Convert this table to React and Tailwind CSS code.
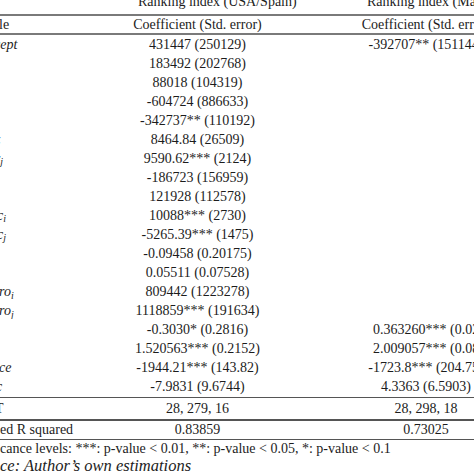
const body = [
  { label: 'cept', lm: 'ml-[-6px]', a: '431447 (250129)', b: '-392707** (151144)' },
  { label: '', lm: '', a: '183492 (202768)', b: '' },
  { label: '', lm: '', a: '88018 (104319)', b: '' },
  { label: '', lm: '', a: '-604724 (886633)', b: '' },
  { label: '', lm: '', a: '-342737** (110192)', b: '' },
  { label: 'z', sub: '', lm: 'ml-[-5px]', a: '8464.84 (26509)', b: '' },
  { label: 'y', sub: 'j', lm: 'ml-[-6px]', a: '9590.62*** (2124)', b: '' },
  { label: '', lm: '', a: '-186723 (156959)', b: '' },
  { label: '', lm: '', a: '121928 (112578)', b: '' },
  { label: 'c', sub: 'i', lm: 'ml-[-3px]', a: '10088*** (2730)', b: '' },
  { label: 'c', sub: 'j', lm: 'ml-[-3px]', a: '-5265.39*** (1475)', b: '' },
  { label: '', lm: '', a: '-0.09458 (0.20175)', b: '' },
  { label: '', lm: '', a: '0.05511 (0.07528)', b: '' },
  { label: 'ro', sub: 'i', lm: 'ml-[-1px]', a: '809442 (1223278)', b: '' },
  { label: 'ro', sub: 'j', lm: 'ml-[-1px]', a: '1118859*** (191634)', b: '' },
  { label: '', lm: '', a: '-0.3030* (0.2816)', b: '0.363260*** (0.02946)', shift: true },
  { label: '', lm: '', a: '1.520563*** (0.2152)', b: '2.009057*** (0.08812)', shift: true },
  { label: 'ce', lm: 'ml-[-1px]', a: '-1944.21*** (143.82)', b: '-1723.8*** (204.75)' },
  { label: 'c', lm: 'ml-[-4px]', a: '-7.9831 (9.6744)', b: '4.3363 (6.5903)' },
];

function Row({ row }) {
  return (
    <div className="flex h-[19.05px] items-center w-[557px]">
      <div className="w-[100px] shrink-0 overflow-hidden whitespace-nowrap italic">
        <span className={`inline-block ${row.lm}`}>
          {row.label}
          {row.sub && <sub className="text-[10px]">{row.sub}</sub>}
        </span>
      </div>
      <div className="w-[195px] shrink-0 text-center whitespace-nowrap">{row.a}</div>
      <div className={`w-[262px] shrink-0 text-center whitespace-nowrap ${row.shift ? 'pl-[26px]' : ''}`}>{row.b}</div>
    </div>
  );
}

export default function App() {
  return (
    <div
      className="w-[474px] h-[474px] overflow-hidden bg-white text-[#1c1c1c] text-[14px] leading-[16px]"
      style={{ fontFamily: '"Liberation Serif", "Times New Roman", serif' }}
    >
      <div className="h-[14px] overflow-hidden">
        <div className="flex w-[557px] mt-[-6px] whitespace-nowrap">
          <div className="w-[138px] shrink-0" />
          <div className="w-[229px] shrink-0">Ranking index (USA/Spain)</div>
          <div className="shrink-0">Ranking index (Mauritania/Spain)</div>
        </div>
      </div>
      <div className="h-[2px] bg-[#7a7a7a]" />
      <div className="flex h-[17px] items-center w-[557px]">
        <div className="w-[100px] shrink-0 overflow-hidden whitespace-nowrap">
          <span className="inline-block ml-[-1px]">le</span>
        </div>
        <div className="w-[195px] shrink-0 text-center whitespace-nowrap">Coefficient (Std. error)</div>
        <div className="w-[262px] shrink-0 text-center whitespace-nowrap">Coefficient (Std. error)</div>
      </div>
      <div className="h-[2px] bg-[#7a7a7a]" />
      <div className="flex flex-col">
        {body.map((row, i) => (
          <Row key={i} row={row} />
        ))}
      </div>
      <div className="h-[1.5px] bg-[#555]" />
      <div className="flex h-[21px] items-center w-[557px]">
        <div className="w-[100px] shrink-0 overflow-hidden whitespace-nowrap">
          <span className="inline-block ml-[-5px]">T</span>
        </div>
        <div className="w-[195px] shrink-0 text-center">28, 279, 16</div>
        <div className="w-[262px] shrink-0 text-center">28, 298, 18</div>
      </div>
      <div className="h-[1.5px] bg-[#555]" />
      <div className="flex h-[18px] items-center w-[557px]">
        <div className="w-[100px] shrink-0 whitespace-nowrap">ed R squared</div>
        <div className="w-[195px] shrink-0 text-center">0.83859</div>
        <div className="w-[262px] shrink-0 text-center">0.73025</div>
      </div>
      <div className="h-[1.5px] bg-[#555]" />
      <div className="whitespace-nowrap mt-[1px]">
        cance levels: ***: p-value &lt; 0.01, **: p-value &lt; 0.05, *: p-value &lt; 0.1
      </div>
      <div className="whitespace-nowrap italic text-[16.5px] leading-[18px]">ce: Author’s own estimations</div>
    </div>
  );
}
